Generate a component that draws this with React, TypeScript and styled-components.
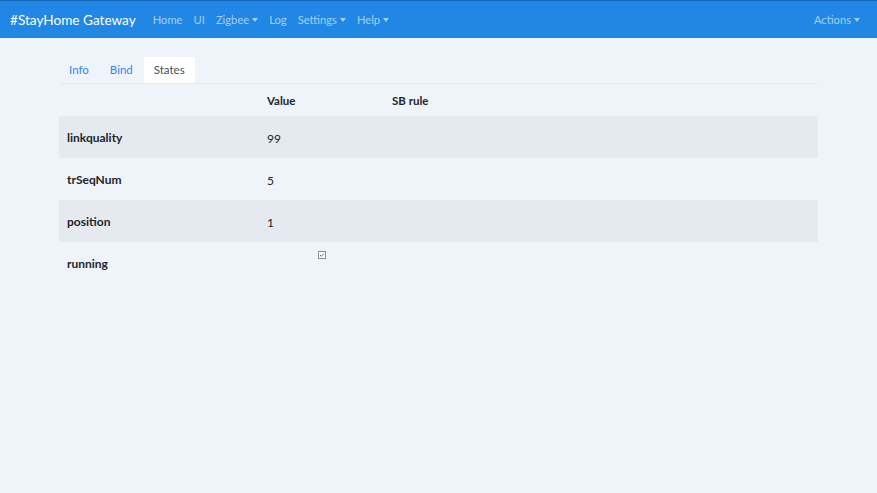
import React from 'react';
import styled, { createGlobalStyle } from 'styled-components';

const GlobalStyle = createGlobalStyle`
  html, body {
    margin: 0;
    padding: 0;
    background: #eff3fa;
    font-family: Lato, "Noto Sans", sans-serif;
    font-size: 13px;
    color: #212529;
  }
`;

const NavBar = styled.nav`
  height: 38px;
  background: #2088e4;
  border-top: 1px solid #1766b8;
  box-sizing: border-box;
  display: flex;
  align-items: center;
  padding: 0 10px;
`;

const Brand = styled.div`
  color: #fff;
  font-size: 13.6px;
  margin-right: 17px;
`;

const NavLinks = styled.div`
  display: flex;
  align-items: center;
  gap: 11px;
  flex: 1;
`;

const NavLink = styled.span`
  color: rgba(255, 255, 255, 0.6);
  font-size: 11.2px;
  display: inline-flex;
  align-items: center;
`;

const Caret = styled.span`
  display: inline-block;
  margin-left: 3px;
  border-top: 4px solid currentColor;
  border-left: 3.5px solid transparent;
  border-right: 3.5px solid transparent;
`;

const Actions = styled(NavLink)`
  margin-right: 7px;
`;

const Content = styled.main`
  padding: 19px 59px 0 59px;
`;

const Tabs = styled.div`
  display: flex;
  border-bottom: 1px solid #e6eaf0;
`;

const Tab = styled.div<{ $active?: boolean }>`
  padding: 5px 10px;
  margin-right: 1px;
  height: 26px;
  box-sizing: border-box;
  background: ${(p) => (p.$active ? '#fff' : 'transparent')};
  color: ${(p) => (p.$active ? '#495057' : '#2b8be2')};
  font-size: 11.5px;
  line-height: 16px;
`;

const Table = styled.table`
  width: 759px;
  border-collapse: collapse;
`;

const HeadCell = styled.th`
  text-align: left;
  font-weight: 700;
  font-size: 11.5px;
  height: 32px;
  padding: 0 8px;
  vertical-align: middle;
`;

const Row = styled.tr<{ $striped?: boolean }>`
  background: ${(p) => (p.$striped ? '#e5e9f0' : 'transparent')};
  height: 42px;
`;

const NameCell = styled.td`
  font-weight: 700;
  font-size: 12px;
  padding: 0 8px;
  width: 184px;
  vertical-align: middle;
`;

const ValueCell = styled.td`
  font-size: 12px;
  padding: 2px 8px 0 8px;
  width: 109px;
  vertical-align: middle;
`;

const RuleCell = styled.td`
  padding: 0 8px;
`;

const CheckWrap = styled.div`
  display: flex;
  padding-left: 51px;
  margin-top: -13px;
`;

const Check = () => (
  <svg width="8" height="8" viewBox="0 0 8 8">
    <rect x="0.5" y="0.5" width="7" height="7" fill="#fff" stroke="#8a8f96" />
    <path d="M2 4 L3.4 5.4 L6 2.6" fill="none" stroke="#6b7078" strokeWidth="1" />
  </svg>
);

const rows = [
  { name: 'linkquality', value: '99' },
  { name: 'trSeqNum', value: '5' },
  { name: 'position', value: '1' },
  { name: 'running', value: null },
];

export default function App() {
  return (
    <>
      <GlobalStyle />
      <NavBar>
        <Brand>#StayHome Gateway</Brand>
        <NavLinks>
          <NavLink>Home</NavLink>
          <NavLink>UI</NavLink>
          <NavLink>Zigbee<Caret /></NavLink>
          <NavLink>Log</NavLink>
          <NavLink>Settings<Caret /></NavLink>
          <NavLink>Help<Caret /></NavLink>
        </NavLinks>
        <Actions>Actions<Caret /></Actions>
      </NavBar>
      <Content>
        <Tabs>
          <Tab>Info</Tab>
          <Tab>Bind</Tab>
          <Tab $active>States</Tab>
        </Tabs>
        <Table>
          <thead>
            <tr>
              <HeadCell></HeadCell>
              <HeadCell>Value</HeadCell>
              <HeadCell>SB rule</HeadCell>
            </tr>
          </thead>
          <tbody>
            {rows.map((r, i) => (
              <Row key={r.name} $striped={i % 2 === 0}>
                <NameCell>{r.name}</NameCell>
                <ValueCell>
                  {r.value !== null ? r.value : <CheckWrap><Check /></CheckWrap>}
                </ValueCell>
                <RuleCell></RuleCell>
              </Row>
            ))}
          </tbody>
        </Table>
      </Content>
    </>
  );
}
